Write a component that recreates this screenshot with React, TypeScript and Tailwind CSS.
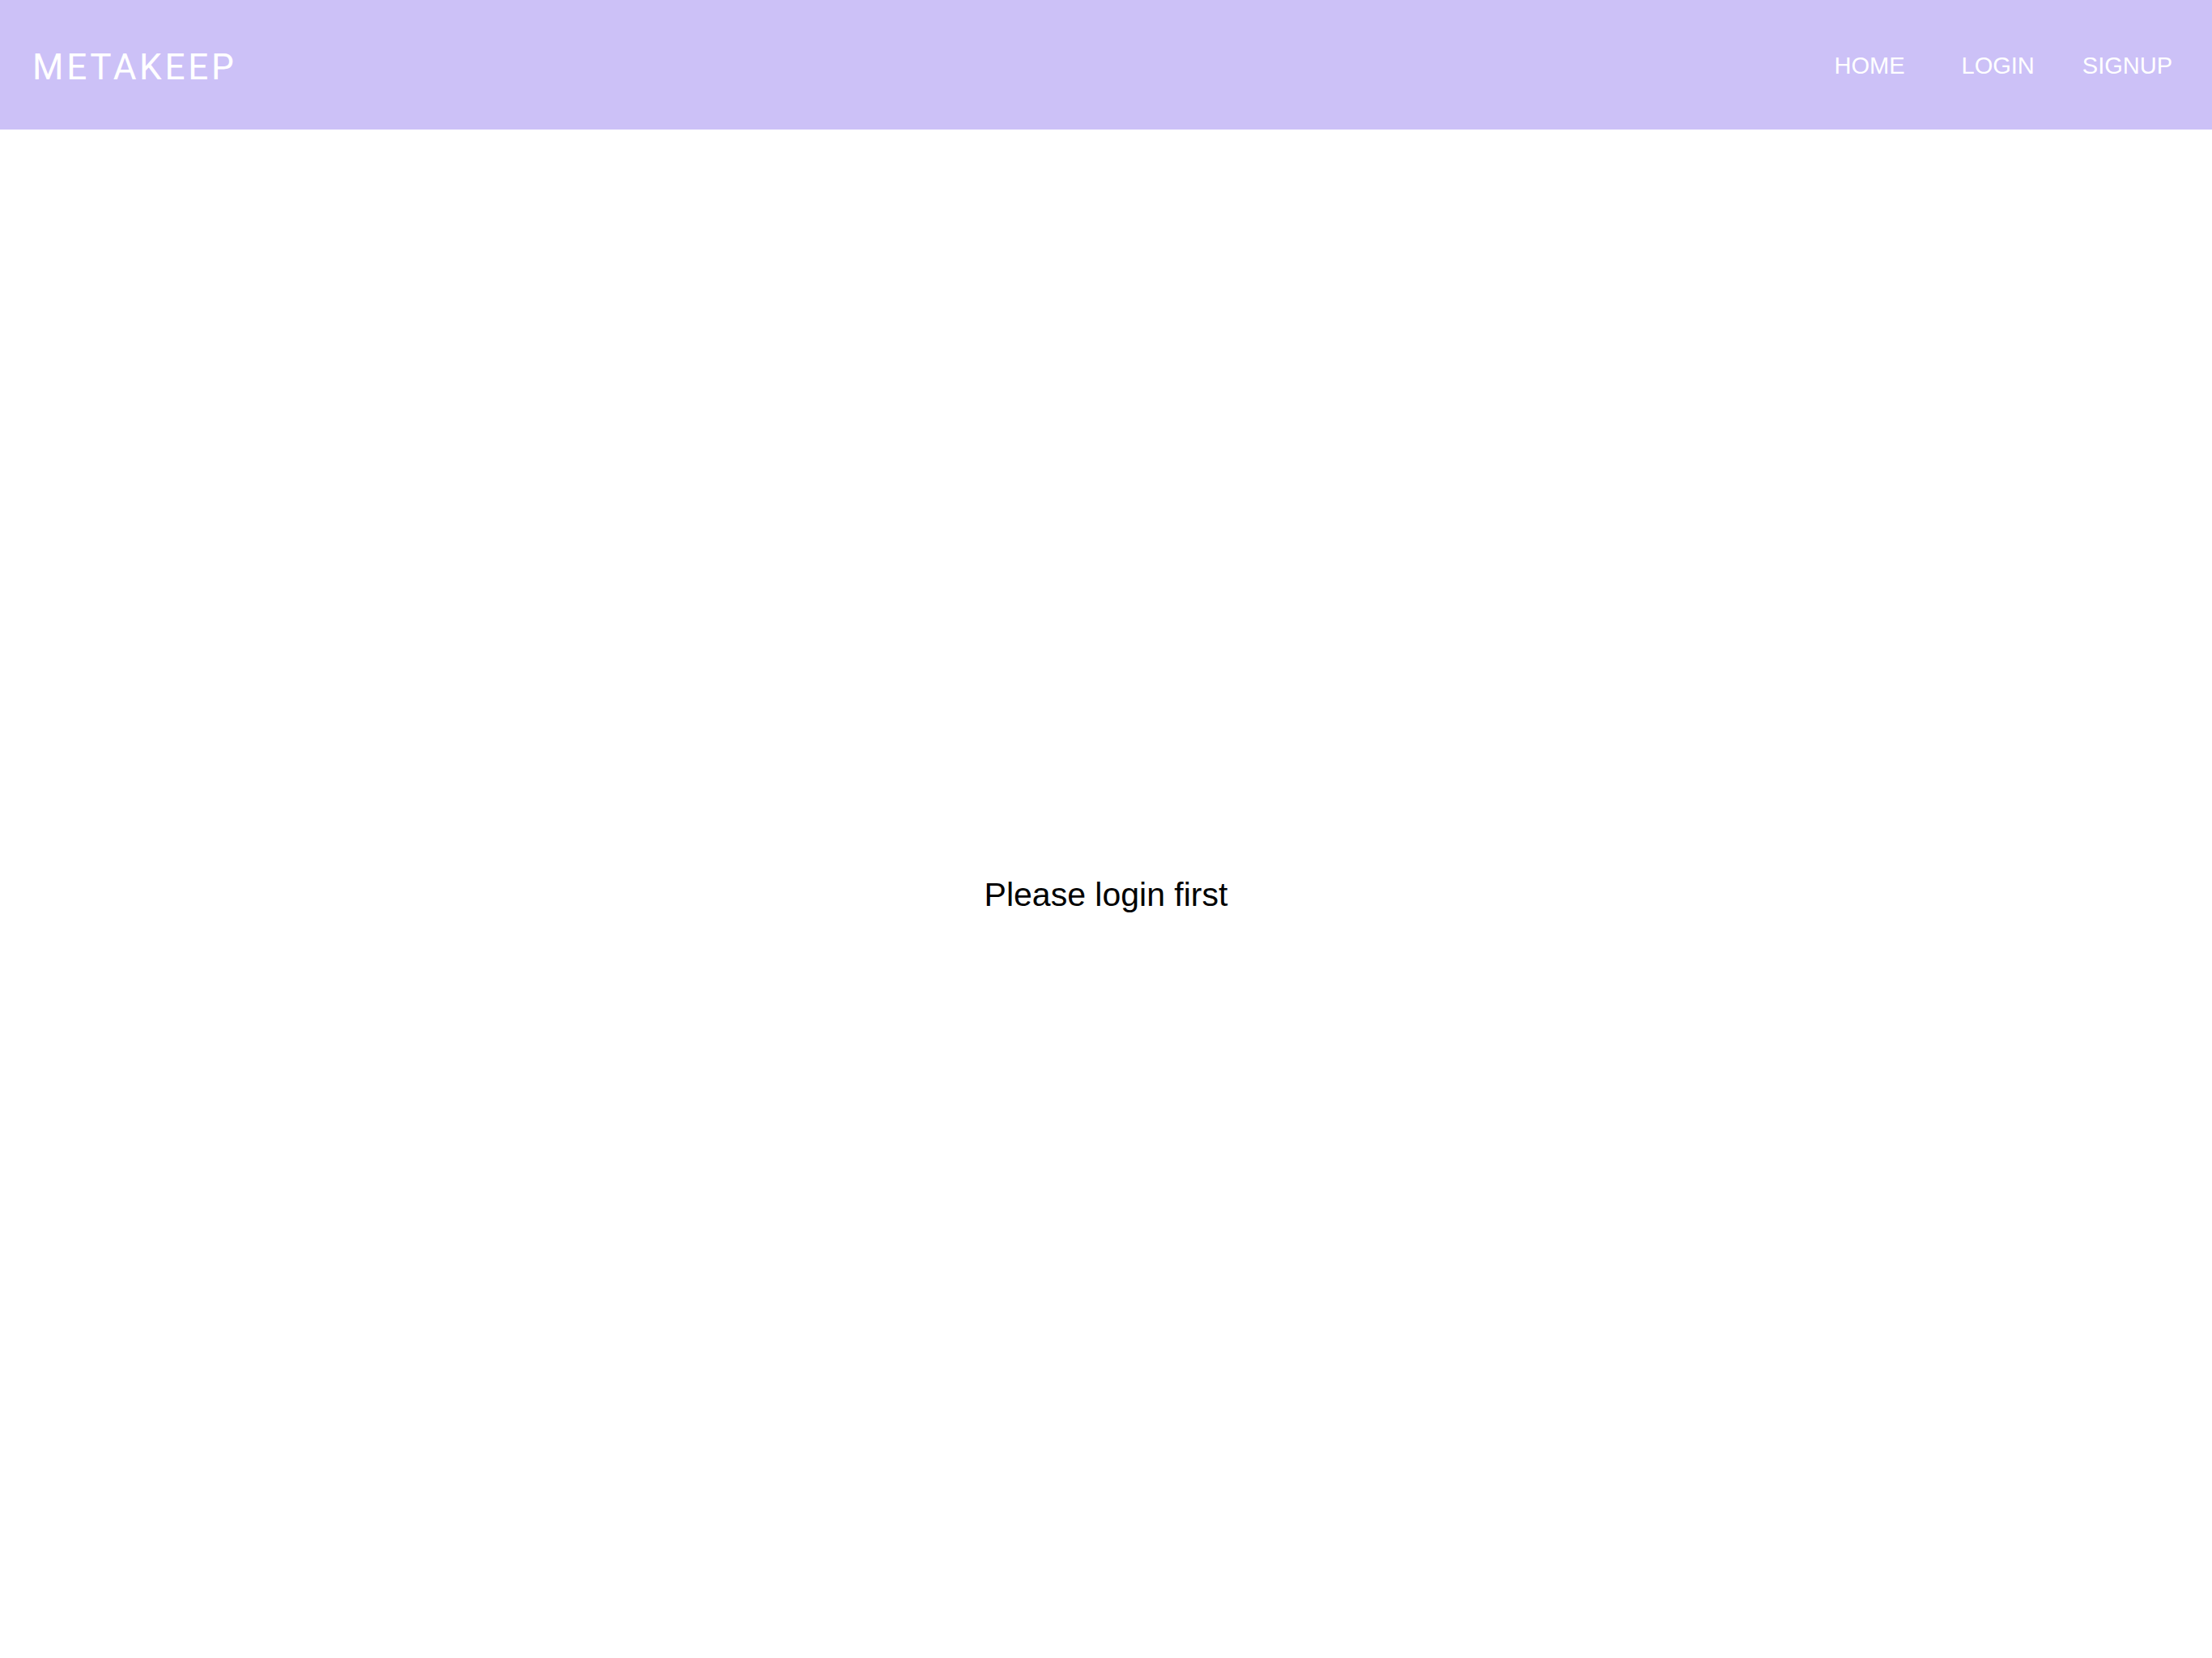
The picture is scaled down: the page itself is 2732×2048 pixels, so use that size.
export default function App() {
  return (
    <div className="flex h-[2048px] w-full flex-col bg-white">
      <header className="flex h-[160px] shrink-0 items-center justify-between bg-[#ccc1f7] pl-[40px] pr-[49px] pt-[3px]">
        <span className="pt-[2px] font-['Roboto',sans-serif] text-[44px] font-normal tracking-[0.085em] text-white">
          METAKEEP
        </span>
        <nav className="flex items-center font-['Liberation_Sans',Arial,sans-serif] text-[29px] text-white">
          <a className="mr-[70px]">HOME</a>
          <a className="mr-[59px]">LOGIN</a>
          <a>SIGNUP</a>
        </nav>
      </header>
      <main className="flex flex-1 items-center justify-center pt-[3px]">
        <p className="font-['Liberation_Sans',Arial,sans-serif] text-[41px] text-black">Please login first</p>
      </main>
    </div>
  );
}
